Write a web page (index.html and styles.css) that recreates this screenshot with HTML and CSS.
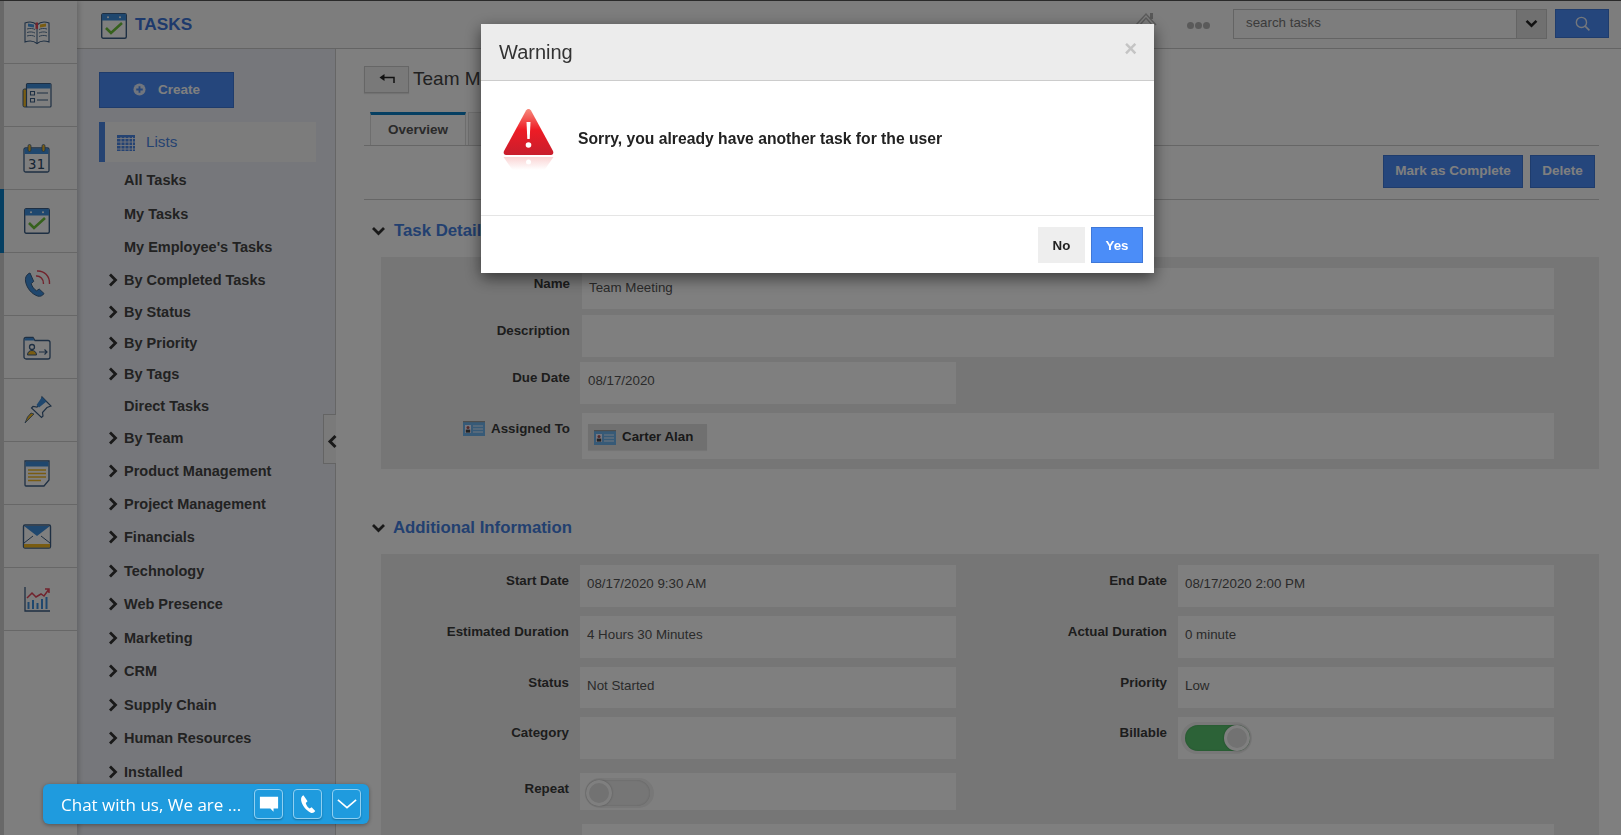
FILE: index.html
```html
<!DOCTYPE html>
<html lang="en">
<head>
<meta charset="utf-8">
<title>Tasks</title>
<link rel="stylesheet" href="styles.css">
</head>
<body>
<svg class="defs" aria-hidden="true">
  <symbol id="chev-r" viewBox="0 0 10 14"><path d="M2 1.500 7.500 7 2 12.500" fill="none" stroke="currentColor" stroke-width="2.800"/></symbol>
  <symbol id="chev-d" viewBox="0 0 14 10"><path d="M1.500 2 7 7.500 12.500 2" fill="none" stroke="currentColor" stroke-width="2.800"/></symbol>
  <symbol id="card" viewBox="0 0 22 15"><rect y="1" width="22" height="14" fill="#6fb4ee"/><rect width="22" height="1.200" fill="#9a9a9a"/><rect x="2" y="4" width="6" height="8" fill="#eef"/><circle cx="5" cy="6.500" r="1.500" fill="#a55"/><rect x="2.800" y="8.600" width="4.400" height="3" fill="#444"/><path d="M10 5h10M10 8h10M10 11h10" stroke="#e6f2ff" stroke-width="1.200"/></symbol>
  <symbol id="cal-check" viewBox="0 0 26 26"><rect x=".7" y=".7" width="24.600" height="24.600" rx="1.500" fill="#fff" stroke="#3c5f86" stroke-width="1.400"/><rect x="1" y="1" width="24" height="6.500" fill="#3f8fdc"/><circle cx="7" cy="4.200" r="1" fill="#fff"/><circle cx="19" cy="4.200" r="1" fill="#fff"/><path d="M5 15l5 5 11-10" fill="none" stroke="#6cc23a" stroke-width="2.600"/></symbol>
</svg>

<div class="app">
  <nav class="rail">
    <a class="rail-item">
      <svg class="rail-ico" viewBox="0 0 30 30"><path d="M15 8C12 5 7 4.500 3 6v19c4-1.500 9-1 12 1.500 3-2.500 8-3 12-1.500V6c-4-1.500-9-1-12 2z" fill="#fff" stroke="#3c5f86" stroke-width="1.100"/><path d="M15 8v18.500" stroke="#3c5f86"/><path d="M5 12c3-1 6-.6 8 .5M5 15.500c3-1 6-.6 8 .5M5 19c3-1 6-.6 8 .5M17 12.500c2-1.100 5-1.500 8-.5M17 16c2-1.100 5-1.500 8-.5M17 19.500c2-1.100 5-1.500 8-.5" fill="none" stroke="#5a7a9c" stroke-width="1"/><path d="M6 6.500l6 1v3l-6-1z" fill="#4a9be4"/><path d="M18 7.500l6-1v3l-6 1z" fill="#f2b925"/><path d="M13.500 5.500h2.500v7l-1.200-1-1.300 1z" fill="#e3475a"/></svg>
    </a>
    <a class="rail-item">
      <svg class="rail-ico" viewBox="0 0 30 30"><rect x="1" y="9" width="5" height="18" rx="1.500" fill="#f2b925" stroke="#3c5f86"/><rect x="4.500" y="3.500" width="24.500" height="23.500" rx="1" fill="#fff" stroke="#3c5f86" stroke-width="1.200"/><rect x="5" y="4" width="23.500" height="4.500" fill="#3f8fdc"/><path d="M8.500 11.500h4V15h-4zM8.500 18.500h4V22h-4z" fill="none" stroke="#3c5f86" stroke-width="1.100"/><path d="M15 13h11M15 20h11" stroke="#3c5f86" stroke-width="1.200"/></svg>
    </a>
    <a class="rail-item">
      <svg class="rail-ico" viewBox="0 0 30 30"><rect x="2" y="5" width="25" height="24" rx="1.500" fill="#fff" stroke="#3c5f86" stroke-width="1.300"/><rect x="2.500" y="5.500" width="24" height="5.500" fill="#3f8fdc"/><rect x="6" y="1.500" width="3" height="7" rx="1.500" fill="#f2b925" stroke="#3c5f86" stroke-width=".8"/><rect x="20" y="1.500" width="3" height="7" rx="1.500" fill="#f2b925" stroke="#3c5f86" stroke-width=".8"/><text class="cal-num" x="14.500" y="26">31</text></svg>
    </a>
    <a class="rail-item active">
      <svg class="rail-ico"><use href="#cal-check" x="2" y="2" width="26" height="26"/></svg>
    </a>
    <a class="rail-item">
      <svg class="rail-ico" viewBox="0 0 30 30"><path d="M8 4C5 5 3 8 3.500 12c.8 6.500 6 13 12 15 2.500.8 5 0 6.500-2.500l-4.800-4.500-2.700 1.800c-2.500-1.500-4.500-4.500-5.300-7.200l2.500-2.200z" fill="#3f8fdc" stroke="#3c5f86"/><path d="M14 7c4-.5 8 3 7.500 8M15 2c7-.5 13 5 12.500 13" fill="none" stroke="#e3475a" stroke-width="1.400"/></svg>
    </a>
    <a class="rail-item">
      <svg class="rail-ico" viewBox="0 0 30 30"><path d="M2 8c0-1.500 1-2.500 2-2.500h7l2 3h13c1.500 0 2 1 2 2V25c0 1-1 2-2 2H4c-1 0-2-1-2-2z" fill="#fff" stroke="#3c5f86" stroke-width="1.300"/><path d="M2.500 8c0-1 .7-2 1.500-2h7l1.500 2.500h-10z" fill="#3f8fdc"/><circle cx="10" cy="15" r="2.500" fill="none" stroke="#3c5f86" stroke-width="1.300"/><path d="M5.500 23c0-3 2-4.500 4.500-4.500s4.500 1.500 4.500 4.500z" fill="#f2b925" stroke="#3c5f86"/><path d="M17 20h8m-2.500-2.500L25 20l-2.500 2.500" fill="none" stroke="#3c5f86" stroke-width="1.200"/></svg>
    </a>
    <a class="rail-item">
      <svg class="rail-ico" viewBox="0 0 30 30"><path d="M20 2l9 9-4 1.500-4.500 5 .5 3.500-1.500 1.500-10-9.500 1.500-1.500 4 .5 4-5z" fill="#fff" stroke="#3c5f86" stroke-width="1.200"/><path d="M20 2l4.500 4.500-7.500 6-2.500-2.500z" fill="#3f8fdc"/><path d="M12 19L3 28l2.500-6 3.500-4z" fill="#f2b925" stroke="#3c5f86" stroke-width=".8"/></svg>
    </a>
    <a class="rail-item">
      <svg class="rail-ico" viewBox="0 0 30 30"><path d="M3 3h24v19l-5 6H4c-.5 0-1-.5-1-1z" fill="#fff" stroke="#3c5f86" stroke-width="1.300"/><rect x="3.500" y="3.500" width="23" height="5" fill="#3f8fdc"/><path d="M6 12h18M6 15.500h18M6 19h18M6 22.500h13" stroke="#f2b925" stroke-width="1.400"/></svg>
    </a>
    <a class="rail-item">
      <svg class="rail-ico" viewBox="0 0 30 30"><rect x="1.500" y="4" width="27" height="23" rx="1.500" fill="#fff" stroke="#3c5f86" stroke-width="1.400"/><path d="M2 5h26L15 15z" fill="#3f8fdc"/><path d="M2 22l9-7M28 22l-9-7" stroke="#3c5f86"/><rect x="2" y="23" width="26" height="3.500" fill="#f2b925"/></svg>
    </a>
    <a class="rail-item">
      <svg class="rail-ico" viewBox="0 0 30 30"><path d="M3 3v24h25" fill="none" stroke="#3c5f86" stroke-width="1.300"/><path d="M6.500 18v7M11 16v9M15.500 19v6M20 15v10M24.500 13v12" stroke="#3f8fdc" stroke-width="2"/><path d="M5 14l5-5 4 4 5-3 3 2 5-7m-4 0h4v4" fill="none" stroke="#e3475a" stroke-width="1.500"/></svg>
    </a>
  </nav>

  <div class="shell">
    <header class="topbar">
      <svg class="app-logo"><use href="#cal-check" width="26" height="26"/></svg>
      <span class="app-name">TASKS</span>
      <div class="top-tools">
        <svg class="home" viewBox="0 0 22 14"><path d="M1 13 11 2l10 11M4 14 11 6l7 8" fill="none" stroke="#b8b8b8" stroke-width="1.400"/><rect x="15" y="1" width="3" height="6" fill="#b0b0b0"/></svg>
        <span class="dots"><i></i><i></i><i></i></span>
        <div class="search">
          <span class="search-text">search tasks</span>
          <span class="search-drop"><svg class="chev-d"><use href="#chev-d"/></svg></span>
        </div>
        <button class="search-btn"><svg viewBox="0 0 16 16"><circle cx="7" cy="7" r="4.800" fill="none" stroke="#e8eef8" stroke-width="1.300"/><path d="M10.500 10.500 14.500 14.500" stroke="#e8eef8" stroke-width="1.500"/></svg></button>
      </div>
    </header>

    <div class="content">
      <aside class="sidebar">
        <button class="create"><svg viewBox="0 0 14 14"><circle cx="7" cy="7" r="6.500" fill="#e0eafc"/><path d="M7 3.500v7M3.500 7h7" stroke="#4b8df8" stroke-width="2"/></svg>Create</button>
        <div class="lists">
          <svg viewBox="0 0 18 16"><rect width="18" height="16" fill="#4b86e4"/><path d="M0 3.500h18M0 7h18M0 10.500h18M0 14h18M4 2v14M8 2v14M12 2v14M15.500 2v14" stroke="#edeff6" stroke-width=".9"/></svg>
          <span>Lists</span>
        </div>
        <ul class="tree">
          <li class="h34"><span>All Tasks</span></li>
          <li><span>My Tasks</span></li>
          <li class="h34"><span>My Employee's Tasks</span></li>
          <li class="h32 has"><svg class="chev-r"><use href="#chev-r"/></svg><span>By Completed Tasks</span></li>
          <li class="h31 has"><svg class="chev-r"><use href="#chev-r"/></svg><span>By Status</span></li>
          <li class="h31 has"><svg class="chev-r"><use href="#chev-r"/></svg><span>By Priority</span></li>
          <li class="h32 has"><svg class="chev-r"><use href="#chev-r"/></svg><span>By Tags</span></li>
          <li class="h32"><span>Direct Tasks</span></li>
          <li class="h32 has"><svg class="chev-r"><use href="#chev-r"/></svg><span>By Team</span></li>
          <li class="has"><svg class="chev-r"><use href="#chev-r"/></svg><span>Product Management</span></li>
          <li class="has"><svg class="chev-r"><use href="#chev-r"/></svg><span>Project Management</span></li>
          <li class="h34 has"><svg class="chev-r"><use href="#chev-r"/></svg><span>Financials</span></li>
          <li class="has"><svg class="chev-r"><use href="#chev-r"/></svg><span>Technology</span></li>
          <li class="h34 has"><svg class="chev-r"><use href="#chev-r"/></svg><span>Web Presence</span></li>
          <li class="has"><svg class="chev-r"><use href="#chev-r"/></svg><span>Marketing</span></li>
          <li class="h34 has"><svg class="chev-r"><use href="#chev-r"/></svg><span>CRM</span></li>
          <li class="has"><svg class="chev-r"><use href="#chev-r"/></svg><span>Supply Chain</span></li>
          <li class="h34 has"><svg class="chev-r"><use href="#chev-r"/></svg><span>Human Resources</span></li>
          <li class="h34 has"><svg class="chev-r"><use href="#chev-r"/></svg><span>Installed</span></li>
        </ul>
        <div class="collapse"><svg class="chev-l" viewBox="0 0 10 14"><path d="M8.500 1.500 3 7l5.500 5.500" fill="none" stroke="#333" stroke-width="3"/></svg></div>
      </aside>

      <main class="main">
        <div class="titlebar">
          <button class="back"><svg viewBox="0 0 16 10"><path d="M.5 3.500 5.500 0v7z" fill="#222"/><path d="M4 3.500h11V9" fill="none" stroke="#222" stroke-width="1.500"/></svg></button>
          <h1>Team Meeting</h1>
        </div>
        <div class="tabs">
          <span class="tab on">Overview</span>
          <span class="tab">Activity</span>
        </div>
        <div class="actions">
          <button class="btn complete">Mark as Complete</button>
          <button class="btn remove">Delete</button>
        </div>

        <h2 class="sec-head first"><svg class="chev-d"><use href="#chev-d"/></svg>Task Details</h2>
        <section class="panel one">
          <div class="row r41"><label class="lab">Name</label><div class="val wide">Team Meeting</div></div>
          <div class="row r42"><label class="lab">Description</label><div class="val wide"></div></div>
          <div class="row r42 due"><label class="lab">Due Date</label><div class="val short">08/17/2020</div></div>
          <div class="row r46"><label class="lab"><svg class="card"><use href="#card"/></svg>Assigned To</label>
            <div class="val wide"><span class="chip"><svg class="card"><use href="#card"/></svg>Carter Alan</span></div></div>
        </section>

        <h2 class="sec-head second"><svg class="chev-d"><use href="#chev-d"/></svg>Additional Information</h2>
        <section class="panel two">
          <label class="lab">Start Date</label><div class="val">08/17/2020 9:30 AM</div>
          <label class="lab">End Date</label><div class="val">08/17/2020 2:00 PM</div>
          <label class="lab">Estimated Duration</label><div class="val">4 Hours 30 Minutes</div>
          <label class="lab">Actual Duration</label><div class="val">0 minute</div>
          <label class="lab">Status</label><div class="val">Not Started</div>
          <label class="lab">Priority</label><div class="val">Low</div>
          <label class="lab">Category</label><div class="val"></div>
          <label class="lab">Billable</label><div class="val tog-cell"><span class="toggle on"><i></i></span></div>
          <label class="lab lower">Repeat</label><div class="val tog-cell lower"><span class="toggle"><i></i></span></div>
          <div class="val full"></div>
        </section>
      </main>
    </div>
  </div>
</div>

<div class="backdrop"></div>

<div class="chat">
  <span class="chat-text">Chat with us, We are ...</span>
  <span class="chat-btn"><svg viewBox="0 0 22 20"><path d="M1 2h20v13h-5v3.500L12.500 15H1z" fill="#fff"/></svg></span>
  <span class="chat-btn"><svg viewBox="0 0 22 22"><path d="M6 1.500c-2 1-3 3-2.500 6 1 5 5.500 11 10.500 13 2 .7 3.800 0 5-1.800l-4-4-2.200 1.300c-2-1.300-3.800-4-4.300-6.200l2-1.800z" fill="#fff"/></svg></span>
  <span class="chat-btn"><svg viewBox="0 0 22 12"><path d="M1 1.500 11 10l10-8.500" fill="none" stroke="#fff" stroke-width="1.800"/></svg></span>
</div>

<div class="modal" role="dialog">
  <div class="modal-head">
    <span class="modal-title">Warning</span>
    <span class="modal-close">×</span>
  </div>
  <div class="modal-body">
    <svg class="warn" viewBox="0 0 50 62">
      <defs>
        <linearGradient id="wg" x1="0" y1="0" x2="0" y2="1"><stop offset="0" stop-color="#f78a7c"/><stop offset=".45" stop-color="#ee1c25"/><stop offset="1" stop-color="#c81e2d"/></linearGradient>
        <linearGradient id="wr" x1="0" y1="0" x2="0" y2="1"><stop offset="0" stop-color="#fad4d4"/><stop offset="1" stop-color="#fff"/></linearGradient>
      </defs>
      <path d="M25 0c1 0 2 .7 2.500 1.600L49.500 42c.8 1.800 0 4-2 4H2.500c-2 0-2.800-2.200-2-4L22.500 1.600C23 .7 24 0 25 0z" fill="url(#wg)"/>
      <path d="M23 13h4l-.8 17h-2.400z" fill="#fff"/><circle cx="25" cy="36" r="2.800" fill="#fff"/>
      <path d="M0 48h50l-9 13H9z" fill="url(#wr)"/><circle cx="25" cy="53" r="2.500" fill="#fff"/>
    </svg>
    <p class="modal-msg">Sorry, you already have another task for the user</p>
  </div>
  <div class="modal-foot">
    <button class="m-btn no">No</button>
    <button class="m-btn yes">Yes</button>
  </div>
</div>
</body>
</html>
```

FILE: styles.css
```css
* { box-sizing: border-box; }
html, body { margin: 0; height: 100%; overflow: hidden; }
body {
  font-family: "Liberation Sans", Arial, sans-serif;
  background: #fff;
  color: #444;
  border-top: 1px solid #555;
}
.defs { display: none; }
button { font-family: inherit; }
svg { display: block; }

.app { display: flex; height: 834px; }

.rail { width: 77px; flex: none; background: #fdfdfd; border-left: 4px solid #d0d0d0; box-shadow: 2px 0 5px rgba(0,0,0,.18); position: relative; z-index: 1; }
.rail-item { display: flex; align-items: center; justify-content: center; height: 63px; padding-right: 7px; background: #fbfbfb; border-bottom: 1px solid #cfcfcf; position: relative; }
.rail-item.active::before { content: ""; position: absolute; left: -4px; top: -1px; bottom: -1px; width: 4px; background: #0b7fc4; }
.rail-ico { width: 30px; height: 30px; }
.cal-num { font-family: "DejaVu Sans Mono", "Liberation Mono", monospace; font-size: 14px; fill: #2d4a6a; text-anchor: middle; }

.shell { flex: 1; min-width: 0; display: flex; flex-direction: column; }

.topbar { height: 48px; flex: none; display: flex; align-items: center; padding: 0 12px 0 24px; background: #fafafa; border-bottom: 1px solid #c8c8c8; }
.app-logo { width: 26px; height: 26px; margin-top: 3px; }
.app-name { margin-left: 8px; font-size: 17.300px; font-weight: 700; color: #3d74d8; }
.top-tools { margin-left: auto; display: flex; align-items: center; }
.home { width: 22px; height: 14px; margin-top: -11px; }
.dots { display: flex; gap: 1px; margin: 2px 0 0 30px; }
.dots i { width: 7px; height: 7px; border-radius: 50%; background: #b4b4b4; }
.search { width: 314px; height: 30px; margin-left: 23px; display: flex; align-items: stretch; border: 1px solid #c8c8c8; background: #fafafa; margin-top: -2px; }
.search-text { flex: 1; padding: 5px 0 0 12px; font-size: 13.330px; color: #777; }
.search-drop { width: 30px; background: #e0e0e0; border-left: 1px solid #c8c8c8; display: flex; align-items: center; justify-content: center; color: #222; }
.search-btn { width: 54px; height: 29px; margin-left: 8px; margin-top: -2px; padding: 0; border: 1px solid #3f78d8; background: #4b8df8; display: flex; align-items: center; justify-content: center; }
.search-btn svg { width: 17px; height: 17px; }
.chev-d { width: 13px; height: 9px; }

.content { flex: 1; min-height: 0; display: flex; }

.sidebar { width: 259px; flex: none; padding: 23px 0 0 22px; background: #edeff6; border-right: 1px solid #cdcdcd; position: relative; }
.create { width: 135px; height: 36px; display: flex; align-items: center; padding: 0 0 2px 33px; gap: 12px; font-size: 13.500px; font-weight: 700; color: #fff; background: #4b8df8; border: 1px solid #3f78d8; }
.create svg { width: 13px; height: 13px; }
.lists { width: 217px; height: 40px; margin-top: 14px; display: flex; align-items: center; gap: 11px; padding: 0 0 2px 12px; border-left: 6px solid #4b86e4; background: #f8f8f8; font-size: 15.200px; color: #4b86e4; }
.lists svg { width: 18px; height: 16px; margin-top: 3px; }
.tree { list-style: none; margin: 1px 0 0; padding: 0; font-size: 14.500px; font-weight: 700; color: #444; }
.tree li { height: 33px; display: flex; align-items: center; padding-left: 25px; }
.tree li.has { padding-left: 9px; }
.tree li.h31 { height: 31px; }
.tree li.h32 { height: 32px; }
.tree li.h34 { height: 34px; }
.chev-r { width: 10px; height: 14px; margin-right: 6px; color: #333; flex: none; }
.collapse { position: absolute; left: 246px; top: 365px; width: 13px; height: 50px; background: #f4f4f4; border: 1px solid #c8c8c8; border-right: 0; display: flex; align-items: center; padding: 4px 0 0 3px; }
.chev-l { width: 10px; height: 15px; flex: none; }

.main { flex: 1; min-width: 0; padding: 17px 22px 0 28px; background: #fff; }
.titlebar { display: flex; align-items: center; height: 26px; gap: 4px; }
.back { width: 45px; height: 27px; padding: 0; background: #f2f2f2; border: 1px solid #ccc; display: flex; align-items: center; justify-content: center; box-shadow: 0 1px 1px rgba(0,0,0,.1); }
.back svg { width: 16px; height: 10px; }
.titlebar h1 { margin: 0; font-size: 19px; font-weight: 400; color: #444; white-space: nowrap; }
.tabs { display: flex; gap: 2px; height: 34px; margin-top: 20px; padding-left: 6px; border-bottom: 1px solid #ccc; }
.tab { height: 33px; padding: 9px 0 0; width: 96px; text-align: center; font-size: 13.500px; font-weight: 700; color: #555; border: 1px solid #ddd; border-bottom: 0; background: #f4f4f4; }
.tab.on { border-top: 3px solid #0b7fc4; background: #fff; padding-top: 7px; }
.actions { height: 54px; display: flex; justify-content: flex-end; gap: 7px; padding: 9px 4px 0 0; border-bottom: 1px solid #ccc; }
.btn { height: 33px; padding: 0 0 2px; font-size: 13.500px; font-weight: 700; color: #fff; background: #4b8df8; border: 1px solid #3f78d8; }
.btn.complete { width: 140px; }
.btn.remove { width: 65px; }

.sec-head { margin: 0; display: flex; align-items: center; font-size: 16.800px; font-weight: 700; color: #4580e0; }
.sec-head .chev-d { width: 15px; height: 10px; margin: 0 7px 0 7px; color: #333; }
.sec-head.first { height: 57px; padding-top: 4px; }
.sec-head.first .chev-d { margin-right: 8px; }
.sec-head.second { height: 85px; padding-top: 33px; }

.panel { margin-left: 17px; background: #ededed; }
.panel.one { padding: 11px 0 10px; height: 212px; }
.row { display: flex; margin-bottom: 5px; }
.row.r41 { height: 41px; margin-bottom: 6px; }
.row.r42 { height: 42px; }
.row.due { margin-bottom: 9px; }
.row.r46 { height: 46px; }
.row .lab { width: 189px; }
.row .val { margin-left: 12px; }
.row .val.wide { width: 972px; padding-left: 6px; }
.row .val.short { width: 376px; margin-left: 10px; padding-left: 8px; }
.row.r41 .lab { padding-top: 8px; }
.row.r41 .val { padding-top: 12px; padding-left: 7px; }

.lab { display: flex; justify-content: flex-end; align-items: flex-start; padding-top: 8px; font-size: 13.330px; font-weight: 700; line-height: 16px; color: #3a3a3a; text-align: right; }
.lab .card { margin-right: 6px; }
.val { background: #fff; padding: 11px 7px 0; font-size: 13.330px; line-height: 16px; color: #555; }
.card { width: 22px; height: 15px; flex: none; }
.chip { display: inline-flex; align-items: center; gap: 6px; width: 119px; height: 26px; padding-left: 6px; background: #e0e0e0; font-size: 13.330px; font-weight: 700; color: #333; box-shadow: 0 1px 1px rgba(0,0,0,.08); }

.panel.two { display: grid; grid-template-columns: 188px 376px 200px 376px; grid-template-rows: 42px 42px 41px 42px 42px 42px; column-gap: 11px; row-gap: 9px; padding-top: 11px; height: 300px; }
.panel.two .lower { margin-top: 5px; }
.panel.two .full { grid-column: 2 / 5; margin: 5px 0 0 2px; }
.panel.two .lab.lower { grid-column: 1; }
.panel.two .val.lower { grid-column: 2; }
.val.tog-cell { padding: 5px 0 0 5px; }
.toggle { display: block; width: 69px; height: 30px; padding: 2px 4px 2px 1px; border-radius: 15px; background: #f0f0f0; position: relative; }
.toggle::before { content: ""; display: block; height: 26px; border-radius: 13px; background: #ececec; box-shadow: inset 0 0 2px rgba(0,0,0,.2); }
.toggle i { position: absolute; left: 1px; top: 2px; width: 26px; height: 26px; border-radius: 50%; background: #e4e4e4; border: 3px solid #fff; box-shadow: 0 0 2px rgba(0,0,0,.3); }
.toggle.on { width: 71px; margin-left: -2px; padding: 3px 2px 3px 4px; height: 32px; border-radius: 16px; }
.toggle.on::before { background: #58c46e; }
.toggle.on i { left: auto; right: 2px; top: 3px; }

.backdrop { position: fixed; inset: 0; background: rgba(0,0,0,.5); z-index: 10; }

.chat { position: fixed; left: 43px; top: 784px; width: 326px; height: 40px; z-index: 20; display: flex; align-items: center; gap: 10px; padding: 0 8px 0 18px; background: #1f9bde; border-radius: 6px; box-shadow: 0 1px 4px rgba(0,0,0,.35); color: #fff; }
.chat-text { font-family: "Open Sans", sans-serif; font-size: 17px; flex: 1; white-space: nowrap; }
.chat-btn { width: 29px; height: 30px; flex: none; display: flex; align-items: center; justify-content: center; border: 1px solid #8fd0f2; border-radius: 4px; box-shadow: 0 1px 2px rgba(0,0,0,.3); }
.chat-btn svg { width: 20px; height: 20px; }

.modal { position: fixed; left: 481px; top: 24px; width: 673px; height: 249px; z-index: 30; display: flex; flex-direction: column; background: #fff; box-shadow: 0 5px 15px rgba(0,0,0,.55); }
.modal-head { height: 57px; flex: none; display: flex; align-items: center; justify-content: space-between; padding: 0 17px 0 18px; background: #ececec; border-bottom: 1px solid #ccc; }
.modal-title { font-size: 20px; color: #333; }
.modal-close { font-size: 22px; font-weight: 700; color: #c4c4c4; margin-top: -6px; }
.modal-body { height: 135px; flex: none; position: relative; display: flex; align-items: flex-start; padding: 28px 0 0 22px; border-bottom: 1px solid #e5e5e5; }
.warn { width: 51px; height: 62px; flex: none; }
.modal-msg { margin: 20px 0 0 24px; font-size: 15.700px; font-weight: 700; line-height: 20px; color: #222; }
.modal-foot { flex: 1; display: flex; justify-content: flex-end; align-items: flex-start; gap: 6px; padding: 11px 11px 0 0; }
.m-btn { height: 36px; font-size: 13.330px; font-weight: 700; padding: 0; }
.m-btn.no { width: 47px; background: #eee; border: 0; color: #222; }
.m-btn.yes { width: 52px; background: #4b8df8; border: 1px solid #3f78d8; color: #fff; }
```
